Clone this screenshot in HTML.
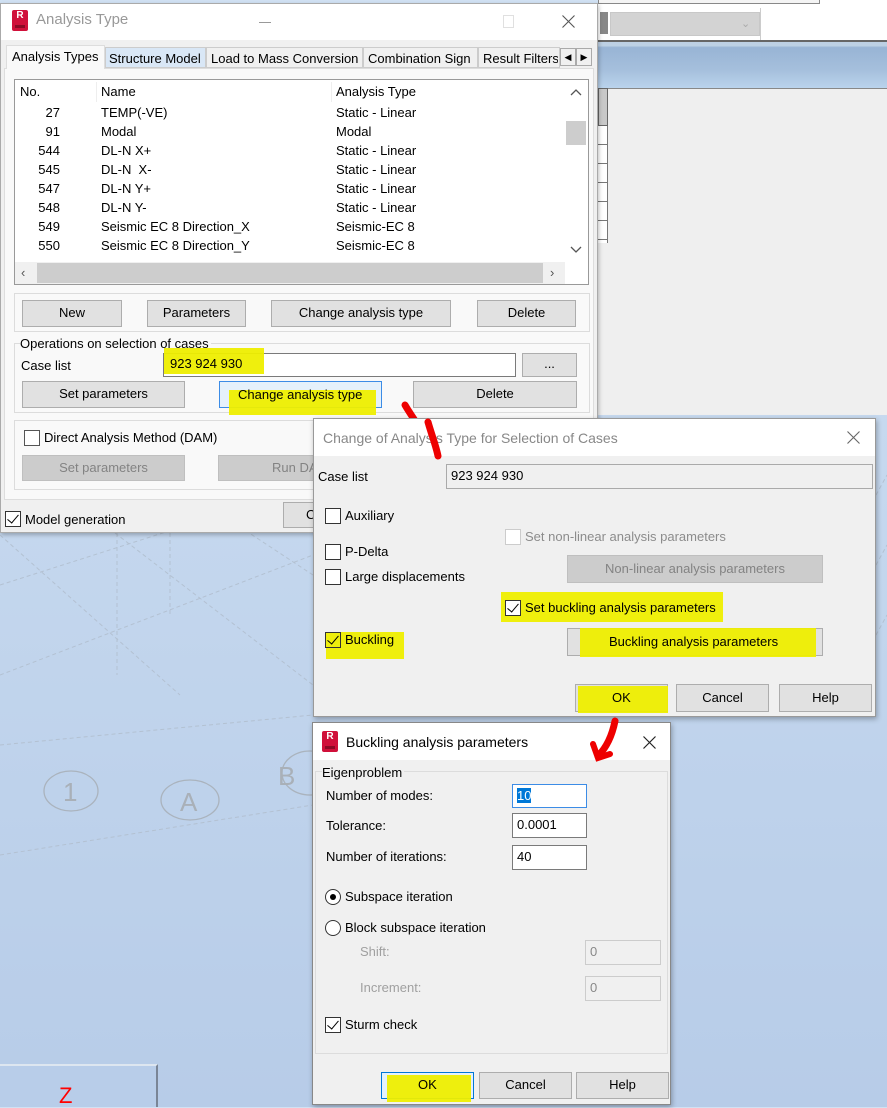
<!DOCTYPE html>
<html><head><meta charset="utf-8">
<style>
*{box-sizing:border-box;margin:0;padding:0}
body{width:887px;height:1107px;overflow:hidden;position:relative;font-family:"Liberation Sans",Arial,sans-serif;font-size:13px;color:#000;background:linear-gradient(#d0e1f3,#b7cce8)}
.a{position:absolute}
.t{position:absolute;white-space:nowrap;line-height:16px}
.btn{position:absolute;background:#e1e1e1;border:1px solid #adadad;text-align:center;font-size:13px;line-height:24px;white-space:nowrap}
.dis{background:#cccccc;border-color:#bfbfbf;color:#838383}
.cb{position:absolute;width:16px;height:16px;border:1px solid #333;background:#fff}
.cb.ck::after{content:"";position:absolute;left:4px;top:0px;width:5px;height:10px;border-right:1.5px solid #000;border-bottom:1.5px solid #000;transform:rotate(40deg)}
.in{position:absolute;background:#fff;border:1px solid #7a7a7a;padding-left:4px;line-height:22px;font-size:13px}
.hl{position:absolute;background:#eeee00;opacity:.95}
.grp{position:absolute;border:1px solid #dcdcdc}
.ic{position:absolute;width:16px;height:21px;background:#d0103a;border-radius:2px;color:#fff;font-size:10px;font-weight:bold;text-align:center;line-height:12px}
.ic::after{content:"";position:absolute;left:3px;bottom:3px;width:10px;height:3px;background:#8a0a25}
.gray{color:#8c8c8c}
</style></head><body>

<!-- top right app area -->
<div class="a" style="left:598px;top:0;width:289px;height:40px;background:#fff"></div>
<div class="a" style="left:598px;top:0;width:222px;height:4px;border:1px solid #888;border-top:none;background:#f4f4f4"></div>
<div class="a" style="left:600px;top:12px;width:8px;height:22px;background:#888"></div>
<div class="a" style="left:610px;top:12px;width:150px;height:24px;background:#d3d3d3;border:1px solid #c8c8c8"></div>
<div class="t" style="left:741px;top:16px;color:#aaa;font-size:11px">&#8964;</div>
<div class="a" style="left:760px;top:8px;width:1px;height:32px;background:#ccc"></div>
<div class="a" style="left:598px;top:40px;width:289px;height:2px;background:#666"></div>
<div class="a" style="left:598px;top:42px;width:289px;height:46px;background:linear-gradient(#bdd0e4 0,#bdd0e4 8%,#98b4d5 12%,#a5bfdc 60%,#bad3ec)"></div>
<div class="a" style="left:598px;top:88px;width:289px;height:327px;background:#efefef;border-top:1px solid #888"></div>
<div class="a" style="left:598px;top:88px;width:10px;height:38px;background:#c8c8c8;border:1px solid #666"></div>
<div class="a" style="left:598px;top:126px;width:10px;height:117px;background:repeating-linear-gradient(#fff 0,#fff 18px,#777 18px,#777 19px);border-right:1px solid #777"></div>

<!-- canvas lines -->
<svg class="a" style="left:0;top:415px" width="887" height="692">
<g stroke="#b3c1d2" stroke-width="1" stroke-dasharray="4,3" fill="none">
<line x1="0" y1="260" x2="313" y2="140"/>
<line x1="0" y1="170" x2="313" y2="70"/>
<line x1="0" y1="120" x2="180" y2="280"/>
<line x1="115" y1="118" x2="313" y2="270"/>
<line x1="70" y1="0" x2="313" y2="160"/>
<line x1="117" y1="118" x2="117" y2="260"/>
<line x1="170" y1="118" x2="170" y2="200"/>
<line x1="0" y1="330" x2="313" y2="300"/>
<line x1="0" y1="440" x2="313" y2="390"/>
<line x1="876" y1="80" x2="887" y2="60"/>
<line x1="876" y1="150" x2="887" y2="130"/>
<line x1="876" y1="220" x2="887" y2="200"/>
</g>
<g stroke="#aab3bd" stroke-width="1.3" fill="none">
<ellipse cx="71" cy="376" rx="27" ry="20"/>
<ellipse cx="190" cy="385" rx="29" ry="20"/>
<ellipse cx="310" cy="358" rx="28" ry="22"/>
</g>
<text x="63" y="386" font-family="Liberation Sans" font-size="26" fill="#a9b0b8">1</text>
<text x="180" y="396" font-family="Liberation Sans" font-size="26" fill="#a9b0b8">A</text>
<text x="278" y="370" font-family="Liberation Sans" font-size="26" fill="#a9b0b8">B</text>
</svg>
<div class="a" style="left:0;top:1064px;width:158px;height:43px;border-top:2px solid #dde6f0;border-right:2px solid #7a8596;background:#b8cde9"></div>
<div class="t" style="left:59px;top:1084px;color:#f00;font-size:22px;line-height:24px">Z</div>

<!-- Dialog 1 -->
<div class="a" style="left:0;top:3px;width:598px;height:530px;background:#f0f0f0;border:1px solid #aaa;box-shadow:1px 2px 4px rgba(0,0,0,.25)"></div>
<div class="a" style="left:1px;top:4px;width:596px;height:36px;background:#fff"></div>
<div class="ic" style="left:12px;top:10px">R</div>
<div class="t" style="left:36px;top:12px;font-size:15px;color:#999">Analysis Type</div>
<div class="a" style="left:259px;top:22px;width:12px;height:1px;background:#999"></div>
<div class="a" style="left:503px;top:15px;width:11px;height:13px;border:1px solid #e0e0e0"></div>
<svg class="a" style="left:562px;top:15px" width="13" height="13"><path d="M0.5 0.5L12.5 12.5M12.5 0.5L0.5 12.5" stroke="#555" stroke-width="1.1"/></svg>

<!-- tabs -->
<div class="a" style="left:4px;top:68px;width:590px;height:432px;background:#f9f9f9;border:1px solid #ddd"></div>
<div class="a" style="left:6px;top:45px;width:99px;height:24px;background:#f9f9f9;border:1px solid #ddd;border-bottom:none"></div>
<div class="t" style="left:12px;top:49px">Analysis Types</div>
<div class="a" style="left:105px;top:47px;width:101px;height:21px;background:#d9e7f6;border:1px solid #ccc"></div>
<div class="t" style="left:109px;top:51px">Structure Model</div>
<div class="a" style="left:206px;top:47px;width:157px;height:21px;background:#f0f0f0;border:1px solid #ccc"></div>
<div class="t" style="left:211px;top:51px">Load to Mass Conversion</div>
<div class="a" style="left:363px;top:47px;width:115px;height:21px;background:#f0f0f0;border:1px solid #ccc"></div>
<div class="t" style="left:368px;top:51px">Combination Sign</div>
<div class="a" style="left:478px;top:47px;width:82px;height:21px;background:#f0f0f0;border:1px solid #ccc;overflow:hidden"></div>
<div class="t" style="left:483px;top:51px;width:75px;overflow:hidden">Result Filters</div>
<div class="a" style="left:560px;top:48px;width:16px;height:18px;border:1px solid #aaa;background:#f0f0f0;font-size:9px;text-align:center;line-height:16px">&#9664;</div>
<div class="a" style="left:576px;top:48px;width:16px;height:18px;border:1px solid #aaa;background:#f0f0f0;font-size:9px;text-align:center;line-height:16px">&#9654;</div>

<!-- list -->
<div class="a" style="left:14px;top:79px;width:575px;height:206px;background:#fff;border:1px solid #999"></div>
<div class="a" style="left:96px;top:82px;width:1px;height:20px;background:#eee"></div>
<div class="a" style="left:331px;top:82px;width:1px;height:20px;background:#eee"></div>
<div class="t" style="left:20px;top:84px">No.</div>
<div class="t" style="left:101px;top:84px">Name</div>
<div class="t" style="left:336px;top:84px">Analysis Type</div>
<div class="a" style="left:20px;top:103px;width:40px;text-align:right;line-height:19px">27<br>91<br>544<br>545<br>547<br>548<br>549<br>550</div>
<div class="a" style="left:101px;top:103px;line-height:19px;white-space:nowrap">TEMP(-VE)<br>Modal<br>DL-N X+<br>DL-N&nbsp; X-<br>DL-N Y+<br>DL-N Y-<br>Seismic EC 8 Direction_X<br>Seismic EC 8 Direction_Y</div>
<div class="a" style="left:336px;top:103px;line-height:19px;white-space:nowrap">Static - Linear<br>Modal<br>Static - Linear<br>Static - Linear<br>Static - Linear<br>Static - Linear<br>Seismic-EC 8<br>Seismic-EC 8</div>
<div class="a" style="left:15px;top:262px;width:550px;height:22px;background:#f0f0f0"></div>
<div class="a" style="left:37px;top:263px;width:506px;height:20px;background:#cdcdcd"></div>
<div class="t" style="left:21px;top:265px;color:#555">&#8249;</div>
<div class="t" style="left:550px;top:265px;color:#555">&#8250;</div>
<div class="a" style="left:566px;top:80px;width:22px;height:182px;background:#fff"></div>
<div class="a" style="left:566px;top:121px;width:20px;height:24px;background:#cdcdcd"></div>
<svg class="a" style="left:570px;top:88px" width="12" height="8"><path d="M1 7L6 2L11 7" stroke="#555" stroke-width="1.3" fill="none"/></svg>
<svg class="a" style="left:570px;top:246px" width="12" height="8"><path d="M1 1L6 6L11 1" stroke="#555" stroke-width="1.3" fill="none"/></svg>

<!-- group 1 -->
<div class="grp" style="left:14px;top:293px;width:576px;height:39px"></div>
<div class="btn" style="left:22px;top:300px;width:100px;height:27px">New</div>
<div class="btn" style="left:147px;top:300px;width:99px;height:27px">Parameters</div>
<div class="btn" style="left:271px;top:300px;width:180px;height:27px">Change analysis type</div>
<div class="btn" style="left:477px;top:300px;width:99px;height:27px">Delete</div>

<!-- group 2 -->
<div class="grp" style="left:14px;top:343px;width:576px;height:70px"></div>
<div class="t" style="left:20px;top:336px;background:#f9f9f9;padding-right:2px">Operations on selection of cases</div>
<div class="t" style="left:21px;top:358px">Case list</div>
<div class="in" style="left:163px;top:353px;width:353px;height:24px"></div>
<div class="hl" style="left:164px;top:348px;width:100px;height:26px"></div>
<div class="t" style="left:170px;top:356px">923 924 930</div>
<div class="btn" style="left:522px;top:353px;width:55px;height:24px;line-height:20px">...</div>
<div class="btn" style="left:22px;top:381px;width:163px;height:27px">Set parameters</div>
<div class="btn" style="left:219px;top:381px;width:163px;height:27px;border:1px solid #3c8ce6;background:#e5f1fb"></div>
<div class="hl" style="left:229px;top:390px;width:147px;height:25px"></div>
<div class="t" style="left:238px;top:387px">Change analysis type</div>
<div class="btn" style="left:413px;top:381px;width:164px;height:27px">Delete</div>

<!-- group 3 -->
<div class="grp" style="left:14px;top:420px;width:576px;height:70px"></div>
<div class="cb" style="left:24px;top:430px;border-color:#555"></div>
<div class="t" style="left:44px;top:430px">Direct Analysis Method (DAM)</div>
<div class="btn dis" style="left:22px;top:455px;width:163px;height:26px">Set parameters</div>
<div class="btn dis" style="left:218px;top:455px;width:100px;height:26px;text-align:left;padding-left:53px">Run DA</div>
<div class="cb ck" style="left:5px;top:511px"></div>
<div class="t" style="left:25px;top:512px">Model generation</div>
<div class="btn" style="left:283px;top:502px;width:40px;height:26px;text-align:left;padding-left:22px">C</div>

<!-- red arrow 1 -->
<svg class="a" style="left:390px;top:395px" width="60" height="60"><path d="M15 10 C22 22 30 32 37 46" stroke="#e00" stroke-width="7" stroke-linecap="round" fill="none"/></svg>

<!-- Dialog 2 -->
<div class="a" style="left:313px;top:418px;width:563px;height:299px;background:#f0f0f0;border:1px solid #999;box-shadow:1px 2px 5px rgba(0,0,0,.3)"></div>
<div class="a" style="left:314px;top:419px;width:561px;height:37px;background:#fff"></div>
<div class="t" style="left:323px;top:430px;font-size:14px;color:#888">Change of Analysis Type for Selection of Cases</div>
<svg class="a" style="left:420px;top:418px" width="30" height="45"><path d="M8 4 C12 18 16 28 18 38" stroke="#e00" stroke-width="7" stroke-linecap="round" fill="none"/></svg>
<svg class="a" style="left:847px;top:431px" width="13" height="13"><path d="M0.5 0.5L12.5 12.5M12.5 0.5L0.5 12.5" stroke="#666" stroke-width="1.1"/></svg>
<div class="t" style="left:318px;top:469px">Case list</div>
<div class="in" style="left:446px;top:464px;width:427px;height:25px;background:#f0f0f0;border-color:#aaa">923 924 930</div>
<div class="cb" style="left:325px;top:508px"></div>
<div class="t" style="left:345px;top:508px">Auxiliary</div>
<div class="cb" style="left:505px;top:529px;border-color:#ccc"></div>
<div class="t gray" style="left:525px;top:529px">Set non-linear analysis parameters</div>
<div class="cb" style="left:325px;top:544px"></div>
<div class="t" style="left:345px;top:544px">P-Delta</div>
<div class="cb" style="left:325px;top:569px"></div>
<div class="t" style="left:345px;top:569px">Large displacements</div>
<div class="btn dis" style="left:567px;top:555px;width:256px;height:28px;line-height:26px">Non-linear analysis parameters</div>
<div class="hl" style="left:501px;top:592px;width:222px;height:30px"></div>
<div class="cb ck" style="left:505px;top:600px"></div>
<div class="t" style="left:525px;top:600px">Set buckling analysis parameters</div>
<div class="hl" style="left:326px;top:632px;width:78px;height:27px"></div>
<div class="cb ck" style="left:325px;top:632px;background:transparent"></div>
<div class="t" style="left:345px;top:632px">Buckling</div>
<div class="btn" style="left:567px;top:628px;width:256px;height:28px"></div>
<div class="hl" style="left:580px;top:628px;width:236px;height:29px"></div>
<div class="t" style="left:609px;top:634px">Buckling analysis parameters</div>
<div class="btn" style="left:575px;top:684px;width:93px;height:28px"></div>
<div class="hl" style="left:578px;top:686px;width:90px;height:27px"></div>
<div class="t" style="left:612px;top:690px">OK</div>
<div class="btn" style="left:676px;top:684px;width:93px;height:28px;line-height:26px">Cancel</div>
<div class="btn" style="left:779px;top:684px;width:93px;height:28px;line-height:26px">Help</div>

<!-- Dialog 3 -->
<div class="a" style="left:312px;top:722px;width:359px;height:383px;background:#f0f0f0;border:1px solid #888;box-shadow:1px 2px 5px rgba(0,0,0,.3)"></div>
<div class="a" style="left:313px;top:723px;width:357px;height:37px;background:#fff"></div>
<div class="ic" style="left:322px;top:731px">R</div>
<div class="t" style="left:346px;top:734px;font-size:14px">Buckling analysis parameters</div>
<svg class="a" style="left:590px;top:716px" width="40" height="48"><path d="M25 5 C22 20 16 32 8 40" stroke="#e00" stroke-width="7" stroke-linecap="round" fill="none"/><path d="M3 28 L8 42 L20 38" stroke="#e00" stroke-width="6" stroke-linecap="round" fill="none"/></svg>
<svg class="a" style="left:643px;top:736px" width="13" height="13"><path d="M0.5 0.5L12.5 12.5M12.5 0.5L0.5 12.5" stroke="#222" stroke-width="1.2"/></svg>
<div class="grp" style="left:315px;top:771px;width:353px;height:283px"></div>
<div class="t" style="left:322px;top:765px;background:#f0f0f0;padding-right:2px">Eigenproblem</div>
<div class="t" style="left:326px;top:788px">Number of modes:</div>
<div class="in" style="left:512px;top:784px;width:75px;height:24px;border-color:#3c8ce6"><span style="background:#0078d7;color:#fff">10</span></div>
<div class="t" style="left:326px;top:818px">Tolerance:</div>
<div class="in" style="left:512px;top:813px;width:75px;height:25px">0.0001</div>
<div class="t" style="left:326px;top:849px">Number of iterations:</div>
<div class="in" style="left:512px;top:845px;width:75px;height:25px">40</div>
<div class="a" style="left:325px;top:889px;width:16px;height:16px;border:1px solid #333;border-radius:50%;background:#fff"></div>
<div class="a" style="left:330px;top:894px;width:6px;height:6px;border-radius:50%;background:#000"></div>
<div class="t" style="left:345px;top:889px">Subspace iteration</div>
<div class="a" style="left:325px;top:920px;width:16px;height:16px;border:1px solid #333;border-radius:50%;background:#fff"></div>
<div class="t" style="left:345px;top:920px">Block subspace iteration</div>
<div class="t gray" style="left:360px;top:944px;color:#a0a0a0">Shift:</div>
<div class="in" style="left:585px;top:940px;width:76px;height:25px;background:#f0f0f0;border-color:#ccc;color:#888">0</div>
<div class="t gray" style="left:360px;top:980px;color:#a0a0a0">Increment:</div>
<div class="in" style="left:585px;top:976px;width:76px;height:25px;background:#f0f0f0;border-color:#ccc;color:#888">0</div>
<div class="cb ck" style="left:325px;top:1017px"></div>
<div class="t" style="left:345px;top:1017px">Sturm check</div>
<div class="btn" style="left:381px;top:1072px;width:93px;height:27px;border:1px solid #0078d7;background:#e5f1fb"></div>
<div class="hl" style="left:387px;top:1075px;width:84px;height:27px"></div>
<div class="t" style="left:418px;top:1077px">OK</div>
<div class="btn" style="left:479px;top:1072px;width:93px;height:27px">Cancel</div>
<div class="btn" style="left:576px;top:1072px;width:93px;height:27px">Help</div>
</body></html>
